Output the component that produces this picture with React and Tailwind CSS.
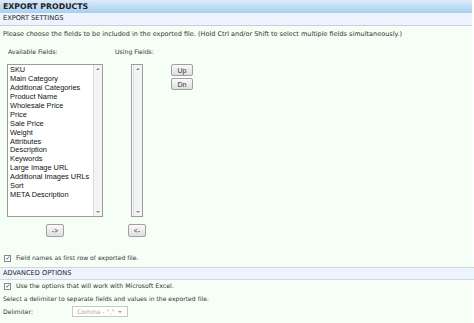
const FIELDS = [
  'SKU', 'Main Category', 'Additional Categories', 'Product Name', 'Wholesale Price',
  'Price', 'Sale Price', 'Weight', 'Attributes', 'Description', 'Keywords',
  'Large Image URL', 'Additional Images URLs', 'Sort', 'META Description',
]

const verdana = "font-['DejaVu_Sans',Verdana,sans-serif]"
const arial = "font-['Liberation_Sans',Arial,sans-serif]"

function Scrollbar() {
  return (
    <div className="w-[9px] h-full bg-[#f3f3f3] border-l border-[#dcdcdc] flex flex-col justify-between items-center py-[3px]">
      <span className="block w-0 h-0 border-x-[2px] border-x-transparent border-b-[2px] border-b-[#888]" />
      <span className="block w-0 h-0 border-x-[2px] border-x-transparent border-t-[2px] border-t-[#888]" />
    </div>
  )
}

function Btn({ children, className = '' }) {
  return (
    <button className={`${arial} flex items-center justify-center text-[7px] leading-none text-[#333] bg-gradient-to-b from-[#fafafa] to-[#dedede] border border-[#a0a0a0] rounded-[2px] ${className}`}>
      {children}
    </button>
  )
}

function Check() {
  return (
    <span className="w-[7px] h-[7px] border border-[#8a8a8a] bg-white flex items-center justify-center">
      <svg viewBox="0 0 8 8" className="w-[6px] h-[6px]">
        <path d="M1.5 4.2 L3.2 6 L6.6 1.6" fill="none" stroke="#3a5a9a" strokeWidth="1.3" />
      </svg>
    </span>
  )
}

export default function App() {
  return (
    <div className={`w-[474px] h-[323px] bg-white overflow-hidden ${verdana} text-[#333]`}>
      <div className="w-[472px] h-full bg-[#f5fff5] flex flex-col">
        <div className="h-[13px] bg-gradient-to-b from-[#dcebfb] to-[#a9cfef] flex items-center px-[3px] text-[7.8px] font-bold text-[#222]">
          EXPORT PRODUCTS
        </div>
        <div className="h-[13px] bg-[#eef4fd] border-b border-[#c5d0d8] flex items-center px-[3px] text-[6.6px] text-[#222]">
          EXPORT SETTINGS
        </div>

        <p className="mt-[4px] px-[3px] text-[6.5px] leading-[8px] whitespace-nowrap">
          Please choose the fields to be included in the exported file. (Hold Ctrl and/or Shift to select multiple fields simultaneously.)
        </p>

        <div className="mt-[10px] flex text-[6.2px] leading-[8px]">
          <span className="ml-[8px] w-[107px]">Available Fields:</span>
          <span>Using Fields:</span>
        </div>

        <div className="mt-[8px] flex items-start">
          <div className="ml-[7px] w-[96px] h-[153px] bg-white border border-[#9c9c9c] flex">
            <ul className={`${arial} flex-1 pl-[2px] pt-[1px] text-[7.4px] leading-[8.93px] text-[#111]`}>
              {FIELDS.map(f => <li key={f} className="whitespace-nowrap">{f}</li>)}
            </ul>
            <Scrollbar />
          </div>
          <div className="ml-[28px] w-[12px] h-[153px] bg-white border border-[#9c9c9c] flex justify-end">
            <Scrollbar />
          </div>
          <div className="ml-[28px] flex flex-col gap-[2px]">
            <Btn className="w-[22px] h-[12px]">Up</Btn>
            <Btn className="w-[22px] h-[12px]">Dn</Btn>
          </div>
        </div>

        <div className="mt-[7px] flex">
          <Btn className="ml-[46px] w-[18px] h-[13px] text-[6px]">-&gt;</Btn>
          <Btn className="ml-[64px] w-[18px] h-[13px] text-[6px]">&lt;-</Btn>
        </div>

        <div className="mt-[17px] flex items-center gap-[5px] pl-[4px] text-[6.1px] leading-[8px]">
          <Check />
          <span>Field names as first row of exported file.</span>
        </div>

        <div className="mt-[5px] h-[13px] w-[474px] bg-[#eef4fd] border-y border-[#cfd8de] flex items-center px-[3px] text-[6.6px] text-[#222]">
          ADVANCED OPTIONS
        </div>

        <div className="mt-[2px] flex items-center gap-[5px] pl-[4px] text-[6.2px] leading-[8px]">
          <Check />
          <span>Use the options that will work with Microsoft Excel.</span>
        </div>

        <p className="mt-[5px] px-[3px] text-[6.1px] leading-[8px]">
          Select a delimiter to separate fields and values in the exported file.
        </p>

        <div className="mt-[3px] flex items-center px-[3px] text-[6.1px] leading-[8px]">
          <span className="w-[69px]">Delimiter:</span>
          <div className="w-[56px] h-[11px] bg-white border border-[#c8c8c8] flex items-center justify-between pl-[4px] pr-[5px] text-[#aaa]">
            <span>Comma - &quot;,&quot;</span>
            <span className="block w-0 h-0 border-x-[2px] border-x-transparent border-t-[2px] border-t-[#999]" />
          </div>
        </div>
      </div>
    </div>
  )
}
